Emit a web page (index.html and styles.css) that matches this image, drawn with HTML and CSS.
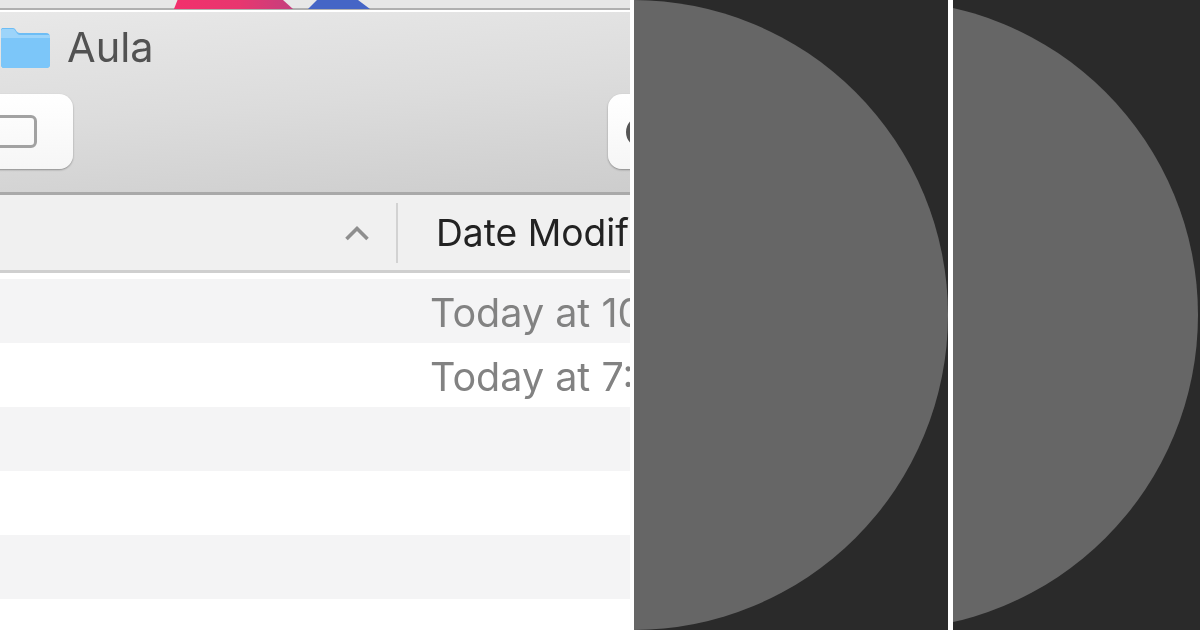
FILE: index.html
```html
<!DOCTYPE html>
<html lang="en">
<head>
<meta charset="utf-8">
<title>Aula</title>
<link rel="stylesheet" href="styles.css">
</head>
<body>
<main class="page">
  <section class="finder">
    <div class="strip">
      <svg class="strip-art" width="630" height="9" viewBox="0 0 630 9" aria-hidden="true">
        <defs>
          <linearGradient id="pink" x1="0" y1="0" x2="1" y2="0">
            <stop offset="0" stop-color="#f2306c"/>
            <stop offset="0.55" stop-color="#e8366f"/>
            <stop offset="1" stop-color="#c4407e"/>
          </linearGradient>
        </defs>
        <polygon points="177.500,0 283,0 293,9 174,9" fill="url(#pink)"/>
        <polygon points="317,0 358,0 370,9 308,9" fill="#4565c6"/>
      </svg>
    </div>
    <div class="toolbar">
      <div class="title-row">
        <svg class="folder" width="51" height="42" viewBox="0 0 51 42" aria-hidden="true">
          <path d="M1 3C1 1.500 2 1 3 1H13C16 1 16 6 20 6H46C49 6 50 8 50 10V37C50 39.500 49 41 46 41H4C2 41 1 39.500 1 37Z" fill="#6dbdf5"/>
          <path d="M1 4C1 2.500 2 2 3 2H13C16 2 16 8 20 8H50V11H1Z" fill="#9cd4fa"/>
          <path d="M1 11H50V37C50 39.500 49 41 46 41H4C2 41 1 39.500 1 37Z" fill="#7cc6f9"/>
        </svg>
        <h1 class="title">Aula</h1>
      </div>
      <div class="controls">
        <div class="btn btn-left"><span class="view-icon"></span></div>
        <div class="btn btn-right"><span class="gear-icon"></span></div>
      </div>
    </div>
    <div class="col-header">
      <div class="col-name">
        <svg class="chevron" width="26" height="16" viewBox="0 0 26 16" aria-hidden="true">
          <path d="M2.500 14L13 3.500L23.500 14" fill="none" stroke="#8e8e8e" stroke-width="3.600"/>
        </svg>
      </div>
      <div class="col-date">Date Modif</div>
    </div>
    <div class="rows">
      <div class="row row-odd">Today at 10</div>
      <div class="row">Today at 7:</div>
      <div class="row row-odd"></div>
      <div class="row"></div>
      <div class="row row-odd"></div>
      <div class="row"></div>
    </div>
  </section>
  <section class="panel panel-one"><div class="disc"></div></section>
  <section class="panel panel-two"><div class="disc"></div></section>
</main>
</body>
</html>
```
FILE: styles.css
```css
* { box-sizing: border-box; }
html, body { margin: 0; height: 100%; background: #fff; }
body { overflow: hidden; font-family: Inter, "Liberation Sans", sans-serif; }

.page { display: flex; width: 1200px; height: 630px; background: #fff; }

.finder { width: 630px; height: 630px; overflow: hidden; display: flex; flex-direction: column; flex: none; margin-right: 4px; filter: blur(0.6px); }

.strip { height: 12px; background: #e7e7e7; border-bottom: 2px solid #fff; position: relative; flex: none; }
.strip::after { content: ""; display: block; height: 2px; background: #b0b0b0; margin-top: 8px; }
.strip-art { display: block; position: absolute; left: 0; top: 0; }

.toolbar { height: 183px; flex: none; background: linear-gradient(175deg, #e8e8e8 0%, #dcdcdc 50%, #cdcdcd 100%); border-bottom: 3px solid #a9a9a9; display: flex; flex-direction: column; }
.title-row { display: flex; align-items: center; gap: 16px; height: 70px; margin-bottom: 12px; }
.folder { display: block; flex: none; margin-top: 2px; }
.title { margin: 0; font-size: 41.500px; font-weight: 400; line-height: 46px; color: #525252; }

.controls { display: flex; justify-content: space-between; }
.btn { height: 75px; width: 110px; background: linear-gradient(#fff, #f6f6f6); border-radius: 14px; box-shadow: 0 1px 2px rgba(0,0,0,.35); display: flex; align-items: center; flex: none; }
.btn-left { margin-left: -37px; justify-content: flex-end; padding-right: 36px; }
.btn-right { margin-right: -88px; padding-left: 18px; }
.view-icon { display: block; width: 60px; height: 33px; border: 3px solid #a2a2a2; border-radius: 6px; }
.gear-icon { display: block; width: 32px; height: 32px; border: 7px solid #555; border-radius: 50%; flex: none; }

.col-header { height: 78px; flex: none; background: #f0f0f0; border-bottom: 3px solid #cfcfcf; display: flex; align-items: center; padding-top: 1px; }
.col-name { width: 398px; height: 60px; flex: none; border-right: 2px solid #d2d2d2; display: flex; align-items: center; justify-content: flex-end; padding-right: 26px; }
.chevron { display: block; }
.col-date { padding-left: 38px; font-size: 37.200px; line-height: 42px; color: #222; white-space: nowrap; }

.rows { padding-top: 6px; background: #fff; flex: 1; }
.row { height: 64px; padding-left: 430px; font-size: 39.500px; line-height: 68px; color: #828282; white-space: nowrap; }
.row-odd { background: #f4f4f5; }

.panel { height: 630px; background: #2a2a2a; overflow: hidden; flex: none; }
.panel-one { width: 314px; margin-right: 5px; }
.panel-two { width: 247px; }
.disc { width: 630px; height: 630px; border-radius: 50%; background: #666; }
.panel-one .disc { margin-left: -316px; }
.panel-two .disc { margin-left: -385px; }
```
